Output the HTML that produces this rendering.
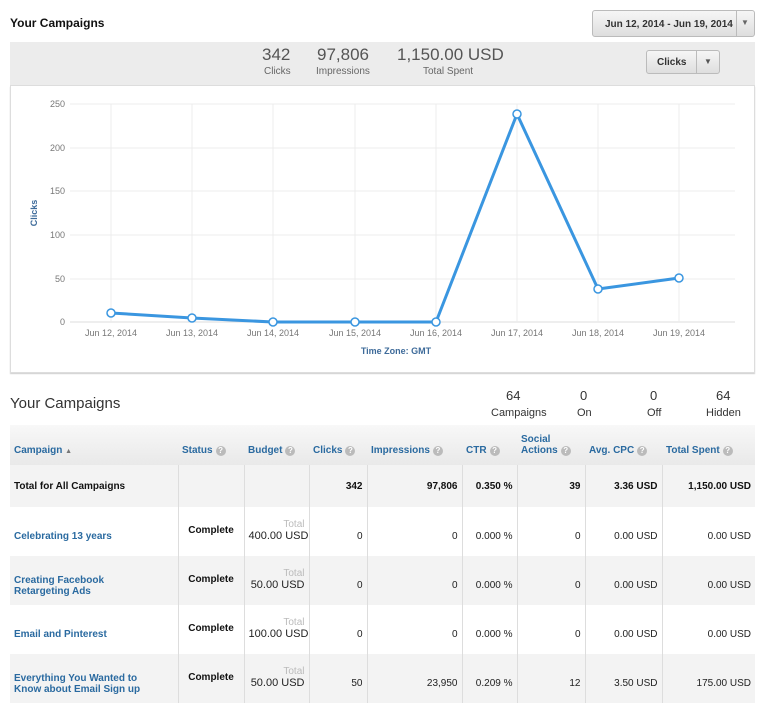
<!DOCTYPE html>
<html><head><meta charset="utf-8"><style>
*{margin:0;padding:0;box-sizing:border-box}
body{width:768px;height:713px;background:#fff;font-family:"Liberation Sans",Arial,sans-serif;position:relative;overflow:hidden;color:#222}
.a{position:absolute}
.h{font-size:12px;font-weight:bold;color:#111}
.btn{border:1px solid #bbb;border-radius:3px;background:linear-gradient(#f6f6f6,#dedede);font-size:10px;font-weight:bold;color:#333}
table{border-collapse:collapse;position:absolute;left:10px;top:425px;width:745px;font-size:10px;table-layout:fixed}
td,th{padding:0 4px;white-space:nowrap}
th{height:40px;background:linear-gradient(#f8f8f8,#e9e9e9);color:#2a6aa0;text-align:left;vertical-align:bottom;padding-bottom:9px;font-size:10px}
th .q{display:inline-block;width:10px;height:10px;border-radius:50%;background:#bbb;color:#fff;font-size:8px;text-align:center;line-height:10px;margin-left:3px}
tr.g td{background:#f3f3f3}
td{border-left:1px solid #ddd;text-align:right;height:49px;vertical-align:middle}
td:first-child{border-left:none;text-align:left;color:#2a6aa0;font-weight:bold;vertical-align:bottom;padding-bottom:14px}
tr.two td:first-child{padding-bottom:8px}
tr.t td{font-weight:bold;color:#111;height:42px;vertical-align:middle;padding-bottom:0}
tr.t td:first-child{color:#111;vertical-align:middle;padding-bottom:0}
td.n{vertical-align:bottom;padding-bottom:14px;padding-right:4px}
td.s{text-align:center;font-weight:bold;color:#111;vertical-align:top;padding-top:18px}
td.b{vertical-align:bottom;padding-bottom:14px;font-size:11px}
td.b span{display:block;color:#bbb;font-size:10px}
</style></head><body>
<div class="a h" style="left:10px;top:16px">Your Campaigns</div>
<div class="a btn" style="left:592px;top:10px;width:163px;height:27px"><span class="a" style="left:12px;top:8px">Jun 12, 2014 - Jun 19, 2014</span><span class="a" style="left:143px;top:0;width:1px;height:25px;background:#bbb"></span><span class="a" style="left:148px;top:7px;font-size:8px;color:#666">▼</span></div>
<div class="a" style="left:10px;top:42px;width:745px;height:44px;background:#ececec;border-bottom:1px solid #ddd"></div>
<div class="a" style="left:262px;top:45px;font-size:17px;color:#555">342</div>
<div class="a" style="left:264px;top:66px;font-size:10px;color:#666">Clicks</div>
<div class="a" style="left:317px;top:45px;font-size:17px;color:#555">97,806</div>
<div class="a" style="left:316px;top:66px;font-size:10px;color:#666">Impressions</div>
<div class="a" style="left:397px;top:45px;font-size:17px;color:#555">1,150.00 USD</div>
<div class="a" style="left:423px;top:66px;font-size:10px;color:#666">Total Spent</div>
<div class="a btn" style="left:646px;top:50px;width:74px;height:24px"><span class="a" style="left:10px;top:6px">Clicks</span><span class="a" style="left:49px;top:0;width:1px;height:22px;background:#bbb"></span><span class="a" style="left:57px;top:6px;font-size:8px;color:#555">▼</span></div>
<div class="a" style="left:10px;top:86px;width:745px;height:287px;border:1px solid #ddd;border-top:none;box-shadow:0 1px 1px #ccc"></div>
<svg class="a" style="left:0;top:0" width="768" height="380">
<g stroke="#ececec" stroke-width="1">
<line x1="70" y1="104" x2="735" y2="104"/><line x1="70" y1="148" x2="735" y2="148"/><line x1="70" y1="191" x2="735" y2="191"/><line x1="70" y1="235" x2="735" y2="235"/><line x1="70" y1="279" x2="735" y2="279"/><line x1="70" y1="322" x2="735" y2="322" stroke="#ddd"/>
<line x1="111" y1="104" x2="111" y2="322"/><line x1="192" y1="104" x2="192" y2="322"/><line x1="273" y1="104" x2="273" y2="322"/><line x1="355" y1="104" x2="355" y2="322"/><line x1="436" y1="104" x2="436" y2="322"/><line x1="517" y1="104" x2="517" y2="322"/><line x1="598" y1="104" x2="598" y2="322"/><line x1="679" y1="104" x2="679" y2="322"/>
</g>
<g font-size="9" fill="#777" text-anchor="end" font-family="Liberation Sans">
<text x="65" y="107">250</text><text x="65" y="151">200</text><text x="65" y="194">150</text><text x="65" y="238">100</text><text x="65" y="282">50</text><text x="65" y="325">0</text>
</g>
<g font-size="9" fill="#777" text-anchor="middle" font-family="Liberation Sans">
<text x="111" y="336">Jun 12, 2014</text><text x="192" y="336">Jun 13, 2014</text><text x="273" y="336">Jun 14, 2014</text><text x="355" y="336">Jun 15, 2014</text><text x="436" y="336">Jun 16, 2014</text><text x="517" y="336">Jun 17, 2014</text><text x="598" y="336">Jun 18, 2014</text><text x="679" y="336">Jun 19, 2014</text>
</g>
<text x="396" y="354" font-size="9" font-weight="bold" fill="#3e6b9a" text-anchor="middle" font-family="Liberation Sans">Time Zone: GMT</text>
<text transform="translate(37,213) rotate(-90)" font-size="9" font-weight="bold" fill="#3e6b9a" text-anchor="middle" font-family="Liberation Sans">Clicks</text>
<polyline fill="none" stroke="#3a96e0" stroke-width="3" stroke-linejoin="round" points="111,313 192,318 273,322 355,322 436,322 517,114 598,289 679,278"/>
<g fill="#fff" stroke="#3a96e0" stroke-width="1.5">
<circle cx="111" cy="313" r="4"/><circle cx="192" cy="318" r="4"/><circle cx="273" cy="322" r="4"/><circle cx="355" cy="322" r="4"/><circle cx="436" cy="322" r="4"/><circle cx="517" cy="114" r="4"/><circle cx="598" cy="289" r="4"/><circle cx="679" cy="278" r="4"/>
</g>
</svg>
<div class="a" style="left:10px;top:395px;font-size:15px;color:#333">Your Campaigns</div>
<div class="a" style="left:506px;top:388px;font-size:13px;color:#333">64</div><div class="a" style="left:491px;top:407px;font-size:11px;color:#333">Campaigns</div>
<div class="a" style="left:580px;top:388px;font-size:13px;color:#333">0</div><div class="a" style="left:577px;top:407px;font-size:11px;color:#333">On</div>
<div class="a" style="left:650px;top:388px;font-size:13px;color:#333">0</div><div class="a" style="left:647px;top:407px;font-size:11px;color:#333">Off</div>
<div class="a" style="left:716px;top:388px;font-size:13px;color:#333">64</div><div class="a" style="left:706px;top:407px;font-size:11px;color:#333">Hidden</div>
<table>
<colgroup><col style="width:168px"><col style="width:66px"><col style="width:65px"><col style="width:58px"><col style="width:95px"><col style="width:55px"><col style="width:68px"><col style="width:77px"><col></colgroup>
<tr><th>Campaign <span style="color:#777;font-size:7px">▲</span></th><th>Status<span class="q">?</span></th><th>Budget<span class="q">?</span></th><th>Clicks<span class="q">?</span></th><th>Impressions<span class="q">?</span></th><th>CTR<span class="q">?</span></th><th>Social<br>Actions<span class="q">?</span></th><th>Avg. CPC<span class="q">?</span></th><th>Total Spent<span class="q">?</span></th></tr>
<tr class="t g"><td>Total for All Campaigns</td><td></td><td></td><td>342</td><td>97,806</td><td>0.350 %</td><td>39</td><td>3.36 USD</td><td>1,150.00 USD</td></tr>
<tr><td>Celebrating 13 years</td><td class="s">Complete</td><td class="b"><span>Total</span>400.00 USD</td><td class="n">0</td><td class="n">0</td><td class="n">0.000 %</td><td class="n">0</td><td class="n">0.00 USD</td><td class="n">0.00 USD</td></tr>
<tr class="g two"><td>Creating Facebook<br>Retargeting Ads</td><td class="s">Complete</td><td class="b"><span>Total</span>50.00 USD</td><td class="n">0</td><td class="n">0</td><td class="n">0.000 %</td><td class="n">0</td><td class="n">0.00 USD</td><td class="n">0.00 USD</td></tr>
<tr><td>Email and Pinterest</td><td class="s">Complete</td><td class="b"><span>Total</span>100.00 USD</td><td class="n">0</td><td class="n">0</td><td class="n">0.000 %</td><td class="n">0</td><td class="n">0.00 USD</td><td class="n">0.00 USD</td></tr>
<tr class="g two"><td>Everything You Wanted to<br>Know about Email Sign up</td><td class="s">Complete</td><td class="b"><span>Total</span>50.00 USD</td><td class="n">50</td><td class="n">23,950</td><td class="n">0.209 %</td><td class="n">12</td><td class="n">3.50 USD</td><td class="n">175.00 USD</td></tr>
</table>
</body></html>
